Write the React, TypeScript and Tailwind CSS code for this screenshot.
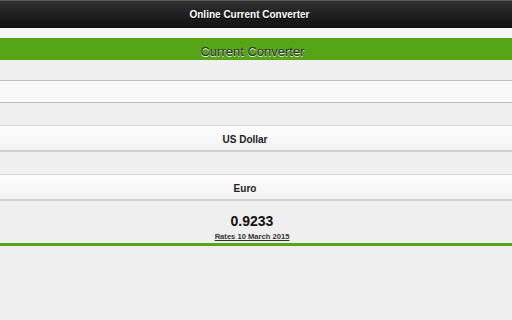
import React from "react";

export default function App() {
  return (
    <div
      className="w-[512px] h-[320px] bg-[#efefef] flex flex-col overflow-hidden"
      style={{ fontFamily: '"Liberation Sans", Arial, sans-serif' }}
    >
      <div className="h-[28px] shrink-0 border-t border-[#5a5a5a] bg-gradient-to-b from-[#303030] to-[#121212] flex items-center justify-center pr-[13px]">
        <span className="text-white font-bold text-[10px] [text-shadow:0_1px_0_#000]">
          Online Current Converter
        </span>
      </div>
      <div className="h-[10px] shrink-0 bg-[#f6f6f6]" />
      <div className="h-[22px] shrink-0 bg-[#55a516] flex items-end justify-center pr-[7px]">
        <span className="text-[#2f2f2f] text-[13px] leading-[16px] [text-shadow:0_1px_0_#e8e8e8]">
          Current Converter
        </span>
      </div>
      <div className="h-[21px] shrink-0 border-b border-[#bdbdbd]" />
      <div className="h-[22px] shrink-0 bg-[#f9f9f9] border-b border-[#bdbdbd]" />
      <div className="h-[22px] shrink-0" />
      <div className="h-[27px] shrink-0 border-t border-[#d6d6d6] border-b-2 border-b-[#d0d0d0] bg-gradient-to-b from-[#fdfdfd] to-[#f2f2f2] flex items-center justify-center pr-[22px] pt-[2px]">
        <span className="text-[#222] font-bold text-[10px]">US Dollar</span>
      </div>
      <div className="h-[22px] shrink-0" />
      <div className="h-[27px] shrink-0 border-t border-[#d6d6d6] border-b-2 border-b-[#d0d0d0] bg-gradient-to-b from-[#fdfdfd] to-[#f2f2f2] flex items-center justify-center pr-[22px] pt-[2px]">
        <span className="text-[#222] font-bold text-[10px]">Euro</span>
      </div>
      <div className="h-[42px] shrink-0 flex flex-col items-center pt-[12px] pr-[8px]">
        <span className="text-[#111] font-bold text-[14px] leading-[16px]">0.9233</span>
        <span className="text-[#333] font-bold text-[7.6px] leading-[10px] underline mt-[3px]">
          Rates 10 March 2015
        </span>
      </div>
      <div className="h-[3px] shrink-0 bg-[#55a516]" />
    </div>
  );
}
